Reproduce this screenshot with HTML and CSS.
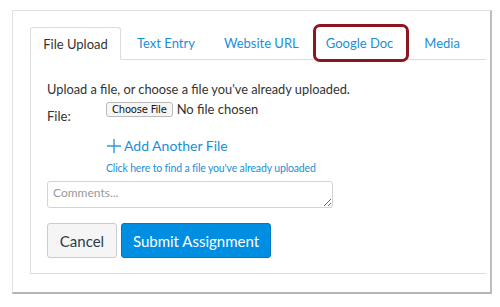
FILE: index.html
```html
<!DOCTYPE html>
<html lang="en">
<head>
    <meta charset="UTF-8">
    <title>Submit Assignment</title>
    <link rel="stylesheet" href="styles.css">
</head>
<body>
    <div class="card">
        <div class="tabs">
            <ul class="tab-list">
                <li class="tab active">File Upload</li>
                <li class="tab">Text Entry</li>
                <li class="tab">Website URL</li>
                <li class="tab highlight">Google Doc</li>
                <li class="tab">Media</li>
            </ul>
            <div class="panel">
                <p class="intro">Upload a file, or choose a file you've already uploaded.</p>
                <div class="file-row">
                    <span class="file-label">File:</span>
                    <div class="file-input">
                        <span class="choose-btn">Choose File</span>
                        <span class="no-file">No file chosen</span>
                    </div>
                </div>
                <div class="add-file">
                    <a class="add-link">
                        <svg width="16" height="16" viewBox="0 0 16 16"><path d="M8 1v14M1 8h14" stroke="#2b9be0" stroke-width="1.4" fill="none"/></svg>
                        Add Another File
                    </a>
                    <a class="find-link">Click here to find a file you've already uploaded</a>
                </div>
                <textarea class="comments" placeholder="Comments..."></textarea>
                <div class="actions">
                    <button class="btn cancel">Cancel</button>
                    <button class="btn submit">Submit Assignment</button>
                </div>
            </div>
        </div>
    </div>
</body>
</html>
```

FILE: styles.css
```css
body {
    margin: 0;
    background: #fff;
    font-family: Lato, "Open Sans", sans-serif;
    color: #333;
}
.card {
    margin: 10px 0 0 12px;
    width: 480px;
    height: 284px;
    box-sizing: border-box;
    border: 1px solid #e2e2e2;
    border-right: 2px solid #bdbdbd;
    border-bottom: 2px solid #b5b5b5;
    padding: 16px 4px 0 17px;
}
.tab-list {
    list-style: none;
    margin: 0;
    padding: 0;
    display: flex;
    border-bottom: 1px solid #d9dde0;
    height: 32px;
}
.tab {
    flex-shrink: 0;
    white-space: nowrap;
    font-size: 13px;
    color: #1a8fd6;
    padding: 0 15px;
    line-height: 32px;
    box-sizing: border-box;
    height: 32px;
}
.tab.active {
    color: #333;
    border: 1px solid #d9dde0;
    border-bottom: 1px solid #fff;
    border-radius: 3px 3px 0 0;
    height: 33px;
    background: #fff;
    padding: 0;
    width: 91px;
    text-align: center;
}
.tab:nth-child(2) {
    padding: 0 15px 0 16px;
}
.tab:nth-child(3) {
    padding: 0 14px 0 14px;
}
.tab.highlight {
    border: 3px solid #8a161e;
    border-radius: 7px;
    height: 38px;
    margin-top: -3px;
    line-height: 32px;
    padding: 0 13px 0 10px;
}
.panel {
    box-sizing: border-box;
    border-left: 1px solid #d9dde0;
    border-bottom: 1px solid #d9dde0;
    height: 214px;
    padding: 21px 0 0 16px;
}
.intro {
    margin: 0;
    font-size: 12.8px;
    line-height: 16px;
}
.file-row {
    display: flex;
    margin-top: 3px;
}
.file-label {
    font-size: 13px;
    width: 59px;
    padding-top: 8px;
}
.file-input {
    display: flex;
    align-items: center;
    height: 18px;
}
.choose-btn {
    font-family: "DejaVu Sans", sans-serif;
    font-size: 10px;
    border: 1px solid #b9b9b9;
    border-radius: 3px;
    padding: 1px 5px;
    background: #f6f6f6;
    color: #111;
    letter-spacing: -0.2px;
}
.no-file {
    font-size: 13px;
    margin-left: 4px;
}
.add-file {
    margin: 13px 0 0 59px;
    display: flex;
    flex-direction: column;
}
.add-link {
    display: flex;
    align-items: center;
    gap: 2px;
    color: #1a8fd6;
    font-size: 14px;
    line-height: 18px;
}
.find-link {
    color: #1a8fd6;
    font-size: 10.5px;
    letter-spacing: -0.15px;
    margin-top: 7px;
    line-height: 13px;
}
.comments {
    display: block;
    margin-top: 6px;
    width: 286px;
    height: 27px;
    box-sizing: border-box;
    border: 1px solid #d3d3d3;
    border-radius: 3px;
    font-family: Lato, sans-serif;
    font-size: 12px;
    padding: 3px 5px;
    resize: vertical;
}
.comments::placeholder {
    color: #999;
}
.actions {
    display: flex;
    gap: 4px;
    margin-top: 15px;
}
.btn {
    font-family: Lato, sans-serif;
    font-size: 15px;
    height: 35px;
    border-radius: 3px;
    cursor: pointer;
}
.cancel {
    width: 70px;
    background: #f5f5f5;
    border: 1px solid #c7cdd1;
    color: #2d3b45;
}
.submit {
    width: 150px;
    background: #008ee2;
    border: 1px solid #0079c1;
    color: #fff;
}
```
